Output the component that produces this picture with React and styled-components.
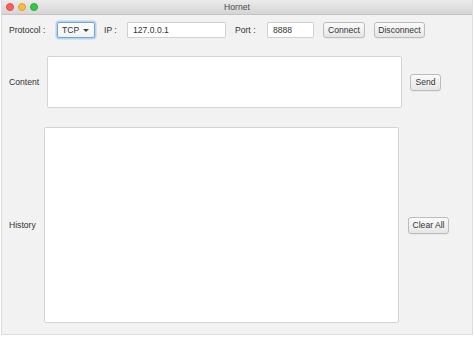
import React from 'react'
import styled, { createGlobalStyle } from 'styled-components'

const Global = createGlobalStyle`
  html, body {
    margin: 0;
    padding: 0;
    background: #ffffff;
  }
  body {
    font-family: "Liberation Sans", Arial, sans-serif;
    font-size: 8.6px;
    color: #333333;
  }
`

const Window = styled.div`
  width: 472px;
  height: 335px;
  margin-left: 1px;
  background: #f2f2f2;
  border: 1px solid #dcdcdc;
  border-top: none;
  box-sizing: border-box;
  display: flex;
  flex-direction: column;
`

const TitleBar = styled.div`
  height: 15px;
  flex: none;
  display: flex;
  align-items: center;
  position: relative;
  background: linear-gradient(#ebebeb, #d5d5d5);
  border-bottom: 1px solid #c4c4c4;
  box-sizing: border-box;
`

const Lights = styled.div`
  display: flex;
  gap: 4px;
  padding-left: 4px;
`

const Light = styled.span`
  width: 8px;
  height: 8px;
  border-radius: 50%;
  background: ${p => p.$color};
  border: 0.5px solid ${p => p.$edge};
  box-sizing: border-box;
`

const Title = styled.div`
  position: absolute;
  left: 0;
  right: 0;
  text-align: center;
  font-size: 8.6px;
  color: #4a4a4a;
`

const Toolbar = styled.div`
  display: flex;
  align-items: center;
  height: 16px;
  margin-top: 7px;
  padding-left: 7px;
`

const Label = styled.span`
  margin-left: ${p => p.$gap || 0}px;
  white-space: nowrap;
  width: ${p => (p.$width ? `${p.$width}px` : 'auto')};
  flex: none;
`

const Select = styled.div`
  width: 38px;
  height: 16px;
  margin-left: ${p => p.$gap}px;
  box-sizing: border-box;
  border: 1px solid #6fa6dc;
  box-shadow: 0 0 0 1.5px #b4d3f1;
  border-radius: 2px;
  background: linear-gradient(#ffffff, #f1f1f1);
  display: flex;
  align-items: center;
  justify-content: space-between;
  padding: 0 5px 0 4px;
  flex: none;
`

const Caret = styled.span`
  width: 0;
  height: 0;
  border-left: 3px solid transparent;
  border-right: 3px solid transparent;
  border-top: 3px solid #444;
`

const Input = styled.div`
  width: ${p => p.$width}px;
  height: 16px;
  margin-left: ${p => p.$gap}px;
  box-sizing: border-box;
  background: #fff;
  border: 1px solid #d0d0d0;
  border-radius: 1px;
  display: flex;
  align-items: center;
  padding-left: 5px;
  flex: none;
`

const Button = styled.button`
  font-family: inherit;
  font-size: 8.6px;
  color: #333;
  height: ${p => p.$height || 16}px;
  width: ${p => p.$width}px;
  margin-left: ${p => p.$gap}px;
  padding: 0;
  box-sizing: border-box;
  border: 1px solid #bcbcbc;
  border-radius: 3px;
  background: linear-gradient(#fbfbfb, #e6e6e6);
  box-shadow: 0 0.5px 0 rgba(0, 0, 0, 0.08);
  flex: none;
`

const FieldRow = styled.div`
  display: flex;
  align-items: center;
  padding-left: 7px;
  margin-top: ${p => p.$top}px;
`

const Area = styled.div`
  width: 355px;
  height: ${p => p.$height}px;
  background: #fff;
  border: 1px solid #d4d4d4;
  border-radius: 2px;
  box-sizing: border-box;
  flex: none;
`

export default function App() {
  return (
    <>
      <Global />
      <Window>
        <TitleBar>
          <Lights>
            <Light $color="#fc605c" $edge="#de4a45" />
            <Light $color="#fdbc40" $edge="#de9f2f" />
            <Light $color="#34c84a" $edge="#27a93a" />
          </Lights>
          <Title>Hornet</Title>
        </TitleBar>

        <Toolbar>
          <Label $width={39}>Protocol :</Label>
          <Select $gap={9}>
            <span>TCP</span>
            <Caret />
          </Select>
          <Label $gap={9} $width={12}>IP :</Label>
          <Input $width={99} $gap={11}>127.0.0.1</Input>
          <Label $gap={9} $width={24}>Port :</Label>
          <Input $width={47} $gap={8}>8888</Input>
          <Button $width={42} $gap={9}>Connect</Button>
          <Button $width={51} $gap={9}>Disconnect</Button>
        </Toolbar>

        <FieldRow $top={18}>
          <Label $width={38}>Content</Label>
          <Area $height={52} />
          <Button $width={31} $height={17} $gap={8}>Send</Button>
        </FieldRow>

        <FieldRow $top={19}>
          <Label $width={35}>History</Label>
          <Area $height={196} />
          <Button $width={41} $height={17} $gap={9}>Clear All</Button>
        </FieldRow>
      </Window>
    </>
  )
}
